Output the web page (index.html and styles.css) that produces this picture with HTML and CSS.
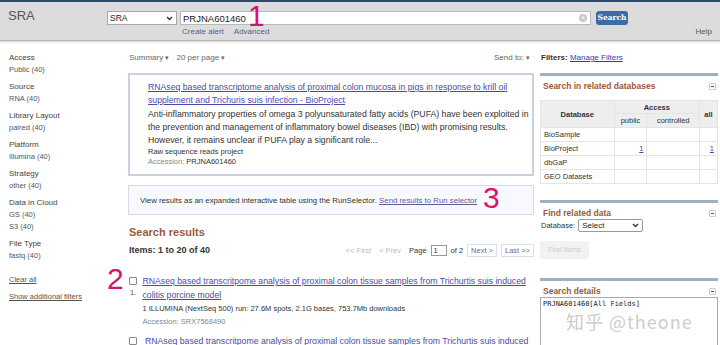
FILE: index.html
```html
<!DOCTYPE html>
<html lang="en">
<head>
<meta charset="utf-8">
<title>SRA - PRJNA601460</title>
<link rel="stylesheet" href="styles.css">
</head>
<body>
<header class="hdr">
  <div class="brand">SRA</div>
  <div class="searchcol">
    <div class="searchrow">
      <div class="dbsel"><span>SRA</span><svg class="chev" width="7" height="5" viewBox="0 0 7 5"><path d="M1 1 L3.5 3.5 L6 1" fill="none" stroke="#333" stroke-width="1.4"/></svg></div>
      <div class="term"><span>PRJNA601460</span><span class="clear">×</span></div>
      <div class="sbtn">Search</div>
    </div>
    <div class="sublinks"><a>Create alert</a><a>Advanced</a></div>
  </div>
  <a class="help">Help</a>
</header>

<div class="main">
  <aside class="facets">
    <div class="fg"><div class="ft">Access</div><div class="fv">Public (40)</div></div>
    <div class="fg"><div class="ft">Source</div><div class="fv">RNA (40)</div></div>
    <div class="fg"><div class="ft">Library Layout</div><div class="fv">paired (40)</div></div>
    <div class="fg"><div class="ft">Platform</div><div class="fv">Illumina (40)</div></div>
    <div class="fg"><div class="ft">Strategy</div><div class="fv">other (40)</div></div>
    <div class="fg"><div class="ft">Data in Cloud</div><div class="fv">GS (40)</div><div class="fv">S3 (40)</div></div>
    <div class="fg"><div class="ft">File Type</div><div class="fv">fastq (40)</div></div>
    <a class="flink first">Clear all</a>
    <a class="flink">Show additional filters</a>
  </aside>

  <section class="content">
    <div class="toolbar">
      <div class="tl"><span>Summary <i>▾</i></span><span>20 per page <i>▾</i></span></div>
      <div class="tr">Send to: <i>▾</i></div>
    </div>

    <div class="bpbox">
      <a class="ttl">RNAseq based transcriptome analysis of proximal colon mucosa in pigs in response to krill oil supplement and Trichuris suis infection - BioProject</a>
      <p class="desc">Anti-inflammatory properties of omega 3 polyunsaturated fatty acids (PUFA) have been exploited in the prevention and management of inflammatory bowel diseases (IBD) with promising results. However, it remains unclear if PUFA play a significant role...</p>
      <div class="small">Raw sequence reads project</div>
      <div class="small acc"><span class="lbl">Accession: </span>PRJNA601460</div>
    </div>

    <div class="rsbox">View results as an expanded interactive table using the RunSelector. <a>Send results to Run selector</a></div>

    <h2 class="sr">Search results</h2>
    <div class="itemsrow">
      <div class="items">Items: 1 to 20 of 40</div>
      <div class="pager">
        <span class="dis">&lt;&lt; First</span>
        <span class="dis">&lt; Prev</span>
        <span>Page</span>
        <span class="pinput">1</span>
        <span>of 2</span>
        <span class="pbtn">Next &gt;</span>
        <span class="pbtn">Last &gt;&gt;</span>
      </div>
    </div>

    <div class="result">
      <div class="rl"><span class="cb"></span><span class="num">1.</span></div>
      <div class="rb">
        <a class="rt">RNAseq based transcritpome analysis of proximal colon tissue samples from Trichurtis suis induced colitis porcine model</a>
        <div class="rd">1 ILLUMINA (NextSeq 500) run: 27.6M spots, 2.1G bases, 753.7Mb downloads</div>
        <div class="rd acc"><span class="lbl">Accession: SRX7568490</span></div>
      </div>
    </div>
    <div class="result r2">
      <div class="rl"><span class="cb"></span></div>
      <div class="rb">
        <a class="rt">RNAseq based transcritpome analysis of proximal colon tissue samples from Trichurtis suis induced</a>
      </div>
    </div>
  </section>

  <aside class="side">
    <div class="filters"><b>Filters:</b> <a>Manage Filters</a></div>

    <div class="portlet">
      <div class="ph"><span>Search in related databases</span><span class="tog"></span></div>
      <table class="reltab">
        <tr class="h1"><th rowspan="2" class="cdb">Database</th><th colspan="2">Access</th><th rowspan="2" class="call">all</th></tr>
        <tr class="h2"><td class="cpub">public</td><td class="cctl">controlled</td></tr>
        <tr><td>BioSample</td><td></td><td></td><td></td></tr>
        <tr><td>BioProject</td><td class="num"><a>1</a></td><td></td><td class="num"><a>1</a></td></tr>
        <tr><td>dbGaP</td><td></td><td></td><td></td></tr>
        <tr><td>GEO Datasets</td><td></td><td></td><td></td></tr>
      </table>
    </div>

    <div class="portlet p2">
      <div class="ph"><span>Find related data</span><span class="tog"></span></div>
      <div class="dbrow">Database: <span class="dsel">Select<svg class="chev" width="7" height="5" viewBox="0 0 7 5"><path d="M1 1 L3.5 3.5 L6 1" fill="none" stroke="#333" stroke-width="1.4"/></svg></span></div>
      <div class="finditems">Find items</div>
    </div>

    <div class="portlet p3">
      <div class="ph"><span>Search details</span><span class="tog"></span></div>
      <div class="details">PRJNA601460[All Fields]</div>
    </div>
  </aside>
</div>

<div class="anno a1">1</div>
<div class="anno a2">2</div>
<div class="anno a3">3</div>
<div class="wm">知乎 @theone</div>
</body>
</html>
```

FILE: styles.css
```css
* { box-sizing: border-box; }
html, body { margin: 0; padding: 0; }
body {
  width: 720px;
  height: 345px;
  overflow: hidden;
  background: #fff;
  font-family: "Liberation Sans", Arial, sans-serif;
  color: #333;
  position: relative;
}
a { color: #4a4aa8; text-decoration: underline; cursor: pointer; }

/* header */
.hdr {
  height: 41px;
  background: #dcdcdc;
  border-top: 2px solid #2c4a72;
  border-bottom: 1px solid #b5b5b5;
  display: flex;
  box-shadow: 0 1px 2px #d0d0d0;
}
.brand {
  width: 107px;
  padding: 7px 0 0 8px;
  font-size: 13px;
  color: #555;
  line-height: 14px;
}
.searchcol { padding-top: 9px; }
.searchrow { display: flex; align-items: center; height: 14px; }
.dbsel {
  width: 70px; height: 14px;
  margin-right: 3px;
  background: #fff;
  border: 1px solid #a9a9a9;
  display: flex; align-items: center; justify-content: space-between;
  padding: 0 3px 0 2px;
  font-size: 8.5px; color: #222;
}
.term {
  width: 411px; height: 14px;
  background: #fff;
  border: 1px solid #b9b9b9;
  display: flex; align-items: center; justify-content: space-between;
  padding: 0 3px 0 2px;
  font-size: 9.5px; color: #222;
}
.clear {
  width: 8px; height: 8px; border-radius: 50%;
  background: #c9c9c9; color: #fff;
  font-size: 7px; line-height: 8px; text-align: center;
}
.sbtn {
  margin-left: 5px;
  width: 32px; height: 14px;
  background: #3b6ca3;
  border-radius: 3px;
  color: #fff;
  font-family: "DejaVu Serif", "Liberation Serif", serif;
  font-weight: bold;
  font-size: 7.5px;
  line-height: 14px;
  text-align: center;
}
.sublinks { margin: 2px 0 0 75px; font-size: 8px; line-height: 10px; display: flex; gap: 10px; }
.sublinks a { color: #5b5b8a; text-decoration: none; }
.help {
  margin-left: auto;
  margin-right: 8px;
  align-self: flex-end;
  margin-bottom: 4px;
  font-size: 8px; color: #555; text-decoration: none;
}

/* main */
.main { display: flex; }
.facets { width: 128px; padding: 11px 0 0 9px; }
.fg { margin-bottom: 5px; }
.ft { font-size: 8px; line-height: 12px; color: #444; }
.fv { font-size: 7.5px; line-height: 12px; color: #555; }
.flink { display: block; font-size: 7.5px; line-height: 12px; color: #555; }
.flink.first { margin-top: 12px; margin-bottom: 5px; }

.content { width: 406px; }
.toolbar {
  display: flex; justify-content: space-between;
  padding-top: 10px; height: 32px;
  font-size: 8px; line-height: 14px; color: #666;
}
.toolbar i { font-style: normal; font-size: 7px; }
.tl { display: flex; gap: 7px; padding-left: 1px; }
.tr { padding-right: 4px; }

.bpbox {
  border: 2px solid #c9d1e0;
  height: 103px;
  padding: 6px 3px 0 18px;
}
.bpbox .ttl { display: block; font-size: 8.7px; line-height: 13px; color: #4b4bab; }
.desc { margin: 1px 0 0; font-size: 8.7px; line-height: 13px; color: #333; }
.small { font-size: 7.5px; line-height: 10px; color: #333; }
.lbl { color: #888; }

.rsbox {
  margin-top: 9px;
  height: 30px;
  border: 1px solid #d6dbe5;
  background: #f8f9fc;
  padding: 0 0 0 11px;
  font-size: 7.8px; line-height: 29px; color: #333;
}
.rsbox a { color: #5c5c99; }

.sr {
  margin: 10px 0 0 1px;
  font-size: 11px; line-height: 14px;
  color: #9a5a3c; font-weight: bold;
}
.itemsrow { display: flex; justify-content: space-between; align-items: center; margin-top: 4px; height: 14px; }
.items { padding-left: 1px; font-size: 9px; font-weight: bold; color: #333; }
.pager { display: flex; align-items: center; font-size: 7.5px; color: #333; gap: 4px; }
.pager .dis { color: #bbb; margin-right: 4px; }
.pinput { width: 16px; height: 11px; border: 1px solid #999; line-height: 9px; padding-left: 2px; }
.pbtn { border: 1px solid #dde; padding: 1px 3px; color: #6a6a9a; }

.result { display: flex; margin-top: 17px; }
.result.r2 { margin-top: 6px; }
.rl { width: 17px; padding-left: 1px; display: flex; flex-direction: column; }
.cb { width: 8px; height: 8px; border: 1px solid #888; border-radius: 1px; margin-top: 3px; }
.num { font-size: 7.5px; margin-top: 3px; padding-left: 1px; color: #555; }
.rt { display: block; font-size: 8.7px; line-height: 14px; color: #4b4bab; }
.rd { font-size: 7.5px; line-height: 13px; color: #333; }

/* side */
.side { width: 178px; margin-left: 6px; }
.filters { padding-top: 11px; height: 32px; font-size: 8px; line-height: 12px; padding-left: 1px; }
.filters a { color: #3a3ab8; }
.ph {
  border-top: 3px solid #9db0c6;
  display: flex; justify-content: space-between; align-items: center;
  padding: 4px 0 0 3px;
  height: 19px;
  font-size: 8.5px; font-weight: bold; color: #985a3a;
}
.tog {
  width: 7px; height: 7px; margin-right: 2px;
  border: 1px solid #ccc; border-radius: 1px;
  background: linear-gradient(#555,#555) center/3px 1px no-repeat;
}
.reltab {
  margin-top: 8px;
  width: 178px;
  border-collapse: collapse;
  font-size: 7.5px;
  color: #333;
}
.reltab th, .reltab td { border: 1px solid #e4e4e4; padding: 0 0 0 3px; height: 14px; text-align: left; }
.reltab th { background: #eeeeee; font-weight: bold; text-align: center; padding: 0; height: 13px; }
.reltab .h2 td { background: #eeeeee; text-align: center; padding: 0; }
.reltab .cdb { width: 74px; }
.reltab .cpub { width: 33px; }
.reltab .cctl { width: 53px; }
.reltab .call { width: 18px; }
.reltab td.num { text-align: right; padding-right: 3px; }
.reltab a { color: #4a4aa8; }

.p2 { margin-top: 16px; }
.dbrow { display: flex; align-items: center; gap: 3px; font-size: 7.5px; padding-left: 1px; }
.dsel {
  width: 65px; height: 13px; border: 1px solid #999; border-radius: 2px;
  display: flex; align-items: center; justify-content: space-between;
  padding: 0 3px; font-size: 8px; color: #222;
}
.finditems {
  margin-top: 9px; width: 49px; height: 18px;
  background: #f2f2f2; border-radius: 2px;
  color: #ccc; font-size: 7px; line-height: 18px; text-align: center;
}
.p3 { margin-top: 19px; }
.details {
  height: 60px;
  border: 1px solid #aaa;
  padding: 1px 2px;
  font-family: "DejaVu Sans Mono", "Liberation Mono", monospace;
  font-size: 7px; line-height: 10px; color: #222;
}

/* overlays: annotations and watermark */
.anno { position: absolute; color: #d2156e; font-size: 30px; line-height: 30px; font-family: "Liberation Sans", sans-serif; }
.a1 { left: 248px; top: 1px; }
.a2 { left: 107px; top: 264px; }
.a3 { left: 483px; top: 183px; }
.wm {
  position: absolute; left: 566px; top: 308px;
  font-family: "Noto Sans CJK SC", "Liberation Sans", sans-serif;
  font-size: 18px; color: rgba(190,190,190,0.8); letter-spacing: 1px;
}
```
